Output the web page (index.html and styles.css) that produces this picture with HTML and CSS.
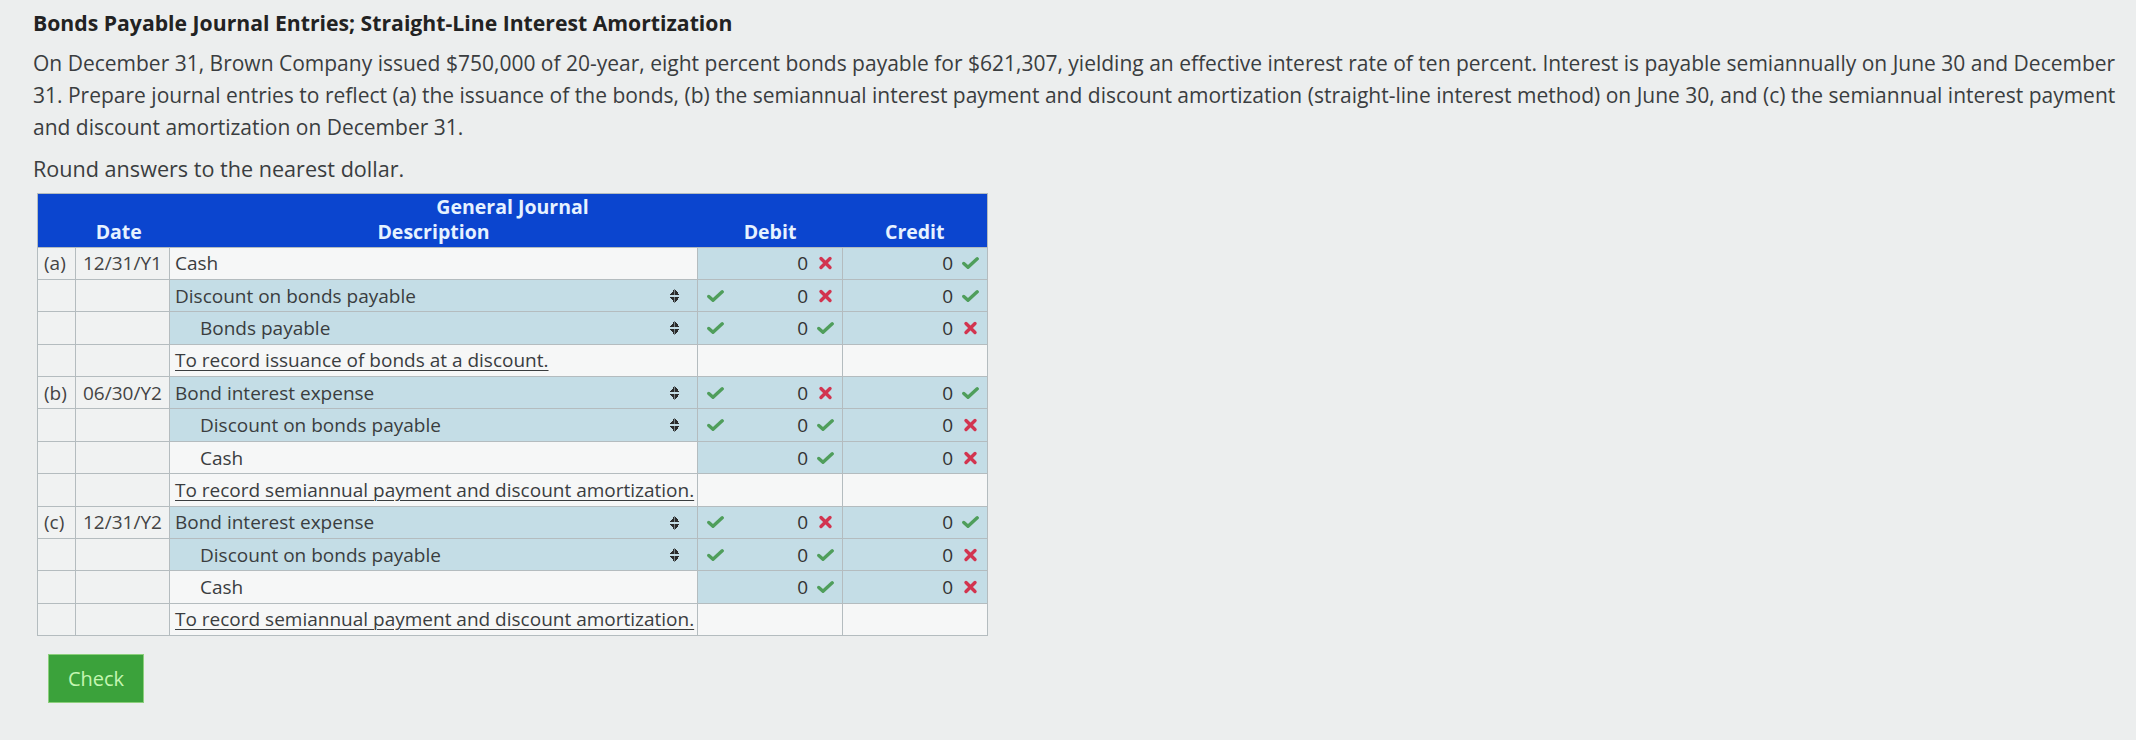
FILE: index.html
```html
<!DOCTYPE html>
<html>
<head>
<meta charset="utf-8">
<link rel="stylesheet" href="styles.css">
</head>
<body>
<div class="page">
  <h1 class="title">Bonds Payable Journal Entries; Straight-Line Interest Amortization</h1>
  <p class="prompt">On December 31, Brown Company issued $750,000 of 20-year, eight percent bonds payable for $621,307, yielding an effective interest rate of ten percent. Interest is payable semiannually on June 30 and December<br>31. Prepare journal entries to reflect (a) the issuance of the bonds, (b) the semiannual interest payment and discount amortization (straight-line interest method) on June 30, and (c) the semiannual interest payment<br>and discount amortization on December 31.</p>
  <p class="note">Round answers to the nearest dollar.</p>

  <table class="journal">
    <colgroup>
      <col class="c-lbl"><col class="c-date"><col class="c-desc"><col class="c-amt"><col class="c-amt">
    </colgroup>
    <thead>
      <tr class="h1"><th colspan="5">General Journal</th></tr>
      <tr class="h2"><th colspan="2" class="h-date">Date</th><th>Description</th><th>Debit</th><th>Credit</th></tr>
    </thead>
    <tbody>
      <tr>
        <td class="lbl">(a)</td><td class="date">12/31/Y1</td>
        <td class="desc plain">Cash</td>
        <td class="amt"><div class="amt-in"><span></span><span class="val">0 <i class="x"></i></span></div></td>
        <td class="amt"><div class="amt-in"><span></span><span class="val">0 <i class="ok"></i></span></div></td>
      </tr>
      <tr>
        <td class="lbl"></td><td class="date"></td>
        <td class="desc sel">Discount on bonds payable<i class="arrows"></i></td>
        <td class="amt"><div class="amt-in"><i class="ok"></i><span class="val">0 <i class="x"></i></span></div></td>
        <td class="amt"><div class="amt-in"><span></span><span class="val">0 <i class="ok"></i></span></div></td>
      </tr>
      <tr>
        <td class="lbl"></td><td class="date"></td>
        <td class="desc sel ind">Bonds payable<i class="arrows"></i></td>
        <td class="amt"><div class="amt-in"><i class="ok"></i><span class="val">0 <i class="ok"></i></span></div></td>
        <td class="amt"><div class="amt-in"><span></span><span class="val">0 <i class="x"></i></span></div></td>
      </tr>
      <tr>
        <td class="lbl"></td><td class="date"></td>
        <td class="desc plain"><u>To record issuance of bonds at a discount.</u></td>
        <td class="empty"></td><td class="empty"></td>
      </tr>
      <tr>
        <td class="lbl">(b)</td><td class="date">06/30/Y2</td>
        <td class="desc sel">Bond interest expense<i class="arrows"></i></td>
        <td class="amt"><div class="amt-in"><i class="ok"></i><span class="val">0 <i class="x"></i></span></div></td>
        <td class="amt"><div class="amt-in"><span></span><span class="val">0 <i class="ok"></i></span></div></td>
      </tr>
      <tr>
        <td class="lbl"></td><td class="date"></td>
        <td class="desc sel ind">Discount on bonds payable<i class="arrows"></i></td>
        <td class="amt"><div class="amt-in"><i class="ok"></i><span class="val">0 <i class="ok"></i></span></div></td>
        <td class="amt"><div class="amt-in"><span></span><span class="val">0 <i class="x"></i></span></div></td>
      </tr>
      <tr>
        <td class="lbl"></td><td class="date"></td>
        <td class="desc plain ind">Cash</td>
        <td class="amt"><div class="amt-in"><span></span><span class="val">0 <i class="ok"></i></span></div></td>
        <td class="amt"><div class="amt-in"><span></span><span class="val">0 <i class="x"></i></span></div></td>
      </tr>
      <tr>
        <td class="lbl"></td><td class="date"></td>
        <td class="desc plain"><u>To record semiannual payment and discount amortization.</u></td>
        <td class="empty"></td><td class="empty"></td>
      </tr>
      <tr>
        <td class="lbl">(c)</td><td class="date">12/31/Y2</td>
        <td class="desc sel">Bond interest expense<i class="arrows"></i></td>
        <td class="amt"><div class="amt-in"><i class="ok"></i><span class="val">0 <i class="x"></i></span></div></td>
        <td class="amt"><div class="amt-in"><span></span><span class="val">0 <i class="ok"></i></span></div></td>
      </tr>
      <tr>
        <td class="lbl"></td><td class="date"></td>
        <td class="desc sel ind">Discount on bonds payable<i class="arrows"></i></td>
        <td class="amt"><div class="amt-in"><i class="ok"></i><span class="val">0 <i class="ok"></i></span></div></td>
        <td class="amt"><div class="amt-in"><span></span><span class="val">0 <i class="x"></i></span></div></td>
      </tr>
      <tr>
        <td class="lbl"></td><td class="date"></td>
        <td class="desc plain ind">Cash</td>
        <td class="amt"><div class="amt-in"><span></span><span class="val">0 <i class="ok"></i></span></div></td>
        <td class="amt"><div class="amt-in"><span></span><span class="val">0 <i class="x"></i></span></div></td>
      </tr>
      <tr>
        <td class="lbl"></td><td class="date"></td>
        <td class="desc plain"><u>To record semiannual payment and discount amortization.</u></td>
        <td class="empty"></td><td class="empty"></td>
      </tr>
    </tbody>
  </table>

  <button class="check-btn" type="button">Check</button>
</div>
</body>
</html>
```

FILE: styles.css
```css
* { box-sizing: border-box; }
html, body { margin: 0; padding: 0; }
body {
  background: #eceeee;
  font-family: "Open Sans", "Liberation Sans", sans-serif;
  color: #3a3d3f;
  overflow: hidden;
}
.page {
  padding: 10px 0 0 33px;
}
.title {
  margin: 0;
  font-size: 21.2px;
  line-height: 26px;
  font-weight: 700;
  color: #222;
}
.prompt {
  margin: 11px 0 0;
  font-size: 21px;
  line-height: 32px;
  color: #3a3d3f;
}
.note {
  margin: 13px 0 0;
  font-size: 21.6px;
  line-height: 26px;
}
.journal {
  margin: 11px 0 0 4px;
  border-collapse: collapse;
  table-layout: fixed;
  width: 949px;
  font-size: 19px;
  border: 1px solid #b4bcbf;
}
.c-lbl { width: 38px; }
.c-date { width: 94px; }
.c-desc { width: 528px; }
.c-amt { width: 145px; }
.journal thead th {
  background: #0b45cf;
  color: #e6f2ff;
  font-weight: 700;
  font-size: 19.5px;
  padding: 0;
}
.h1 th { height: 25px; line-height: 25px; padding-top: 2px; text-align: center; }
.h2 th { height: 28px; line-height: 26px; vertical-align: top; }
.h2 .h-date { padding-left: 30px; }
.journal td {
  height: 32.4px;
  padding: 0;
  border: 1px solid #b4bcbf;
  line-height: 30px;
  white-space: nowrap;
}
.lbl, .date {
  background: #f0f2f2;
  color: #444;
}
.lbl { padding-left: 6px !important; }
.date { padding-left: 7px !important; }
.desc { padding-left: 5px !important; position: relative; }
.desc.ind { padding-left: 30px !important; }
.desc.plain { background: #f6f7f7; }
.desc.sel { background: #c4dde6; }
.desc u { text-decoration-thickness: 1px; text-underline-offset: 3px; }
.empty { background: #f6f7f7; }
.amt { background: #c4dde6; }
.amt-in {
  display: flex;
  justify-content: space-between;
  align-items: center;
  padding: 0 8px 0 9px;
}
.val { display: flex; align-items: center; gap: 9px; color: #333; }
.arrows {
  position: absolute;
  right: 18px;
  top: 9px;
  width: 9px;
  height: 14px;
  background:
    linear-gradient(to bottom right, transparent 49%, #2b2b2b 50%) 0 0 / 4.5px 6px no-repeat,
    linear-gradient(to bottom left, transparent 49%, #2b2b2b 50%) 4.5px 0 / 4.5px 6px no-repeat,
    linear-gradient(to top right, transparent 49%, #2b2b2b 50%) 0 8px / 4.5px 6px no-repeat,
    linear-gradient(to top left, transparent 49%, #2b2b2b 50%) 4.5px 8px / 4.5px 6px no-repeat;
}
.ok, .x {
  display: inline-block;
  width: 17px;
  height: 14px;
  background-repeat: no-repeat;
  background-position: center;
}
.ok {
  background-image: url("data:image/svg+xml,%3Csvg xmlns='http://www.w3.org/2000/svg' width='17' height='14' viewBox='0 0 17 14'%3E%3Cpath d='M1.8 7.5 L6 11.3 L15.2 2.8' fill='none' stroke='%234f9e5b' stroke-width='3.4' stroke-linecap='round' stroke-linejoin='round'/%3E%3C/svg%3E");
}
.x {
  background-image: url("data:image/svg+xml,%3Csvg xmlns='http://www.w3.org/2000/svg' width='17' height='14' viewBox='0 0 17 14'%3E%3Cpath d='M4 2.5 L13 11.5 M13 2.5 L4 11.5' fill='none' stroke='%23d2344f' stroke-width='3.4' stroke-linecap='round'/%3E%3C/svg%3E");
}
.check-btn {
  margin: 18px 0 0 15px;
  width: 96px;
  height: 49px;
  background: #3ba23b;
  border: 1px solid #8ccf7c;
  color: #c4f6b2;
  font-family: "Open Sans", "Liberation Sans", sans-serif;
  font-size: 20px;
  padding: 0;
  cursor: pointer;
}
```
